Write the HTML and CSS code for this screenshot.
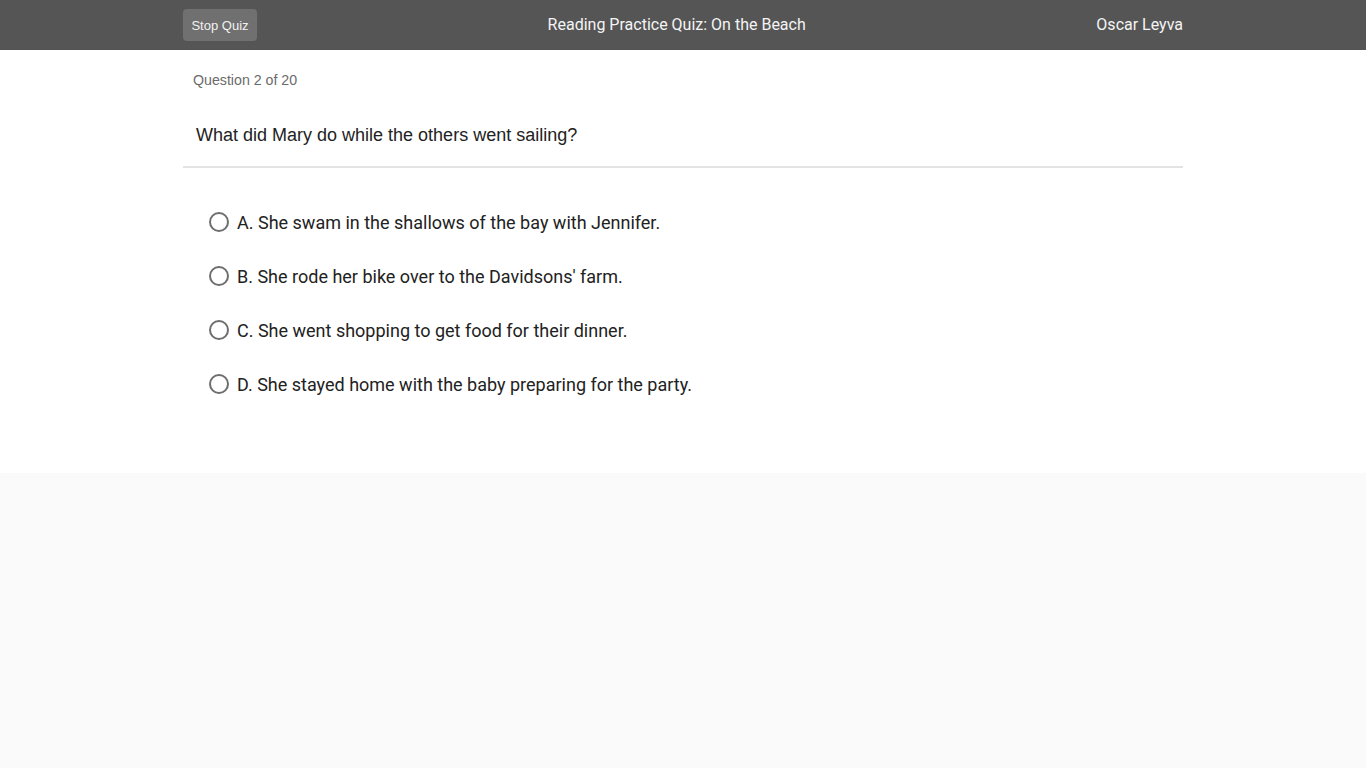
FILE: index.html
```html
<!DOCTYPE html>
<html>
<head>
<meta charset="utf-8">
<link rel="stylesheet" href="styles.css">
</head>
<body>
<header class="topbar">
  <div class="topbar-inner">
    <button class="stop-btn">Stop Quiz</button>
    <div class="quiz-title">Reading Practice Quiz: On the Beach</div>
    <div class="user-name">Oscar Leyva</div>
  </div>
</header>
<main class="content">
  <div class="container">
    <div class="counter">Question 2 of 20</div>
    <div class="question">What did Mary do while the others went sailing?</div>
    <ul class="options">
      <li class="option"><span class="radio"></span><span class="label">A. She swam in the shallows of the bay with Jennifer.</span></li>
      <li class="option"><span class="radio"></span><span class="label">B. She rode her bike over to the Davidsons' farm.</span></li>
      <li class="option"><span class="radio"></span><span class="label">C. She went shopping to get food for their dinner.</span></li>
      <li class="option"><span class="radio"></span><span class="label">D. She stayed home with the baby preparing for the party.</span></li>
    </ul>
  </div>
</main>
</body>
</html>
```
FILE: styles.css
```css
html, body {
  margin: 0;
  padding: 0;
  background: #fafafa;
  font-family: Roboto, "Liberation Sans", sans-serif;
}
.topbar {
  background: #555555;
  height: 50px;
}
.topbar-inner {
  width: 1000px;
  margin: 0 auto;
  height: 50px;
  display: flex;
  justify-content: space-between;
  align-items: center;
}
.stop-btn {
  background: #707070;
  color: #f2f2f2;
  border: none;
  border-radius: 4px;
  height: 32px;
  width: 74px;
  padding: 0;
  font-family: "Liberation Sans", Arial, sans-serif;
  font-size: 13px;
}
.quiz-title, .user-name {
  color: #f4f4f4;
  font-size: 16px;
  line-height: 20px;
  margin-top: 0;
}
.content {
  background: #ffffff;
  height: 423px;
}
.container {
  width: 1000px;
  margin: 0 auto;
}
.counter {
  font-family: "Liberation Sans", Arial, sans-serif;
  font-size: 14.2px;
  color: #6b6b6b;
  padding: 22px 0 0 10px;
  line-height: 16px;
}
.question {
  font-family: "Liberation Sans", Arial, sans-serif;
  font-size: 18px;
  color: #222;
  padding: 36px 0 20px 13px;
  line-height: 22px;
  border-bottom: 2px solid #e3e3e3;
}
.options {
  list-style: none;
  margin: 0;
  padding: 27px 0 0 26px;
}
.option {
  display: flex;
  align-items: center;
  height: 54px;
  font-size: 18px;
  color: #222;
}
.radio {
  width: 16px;
  height: 16px;
  border: 2px solid #6e6e6e;
  border-radius: 50%;
  margin-right: 8px;
  flex: none;
}
```
